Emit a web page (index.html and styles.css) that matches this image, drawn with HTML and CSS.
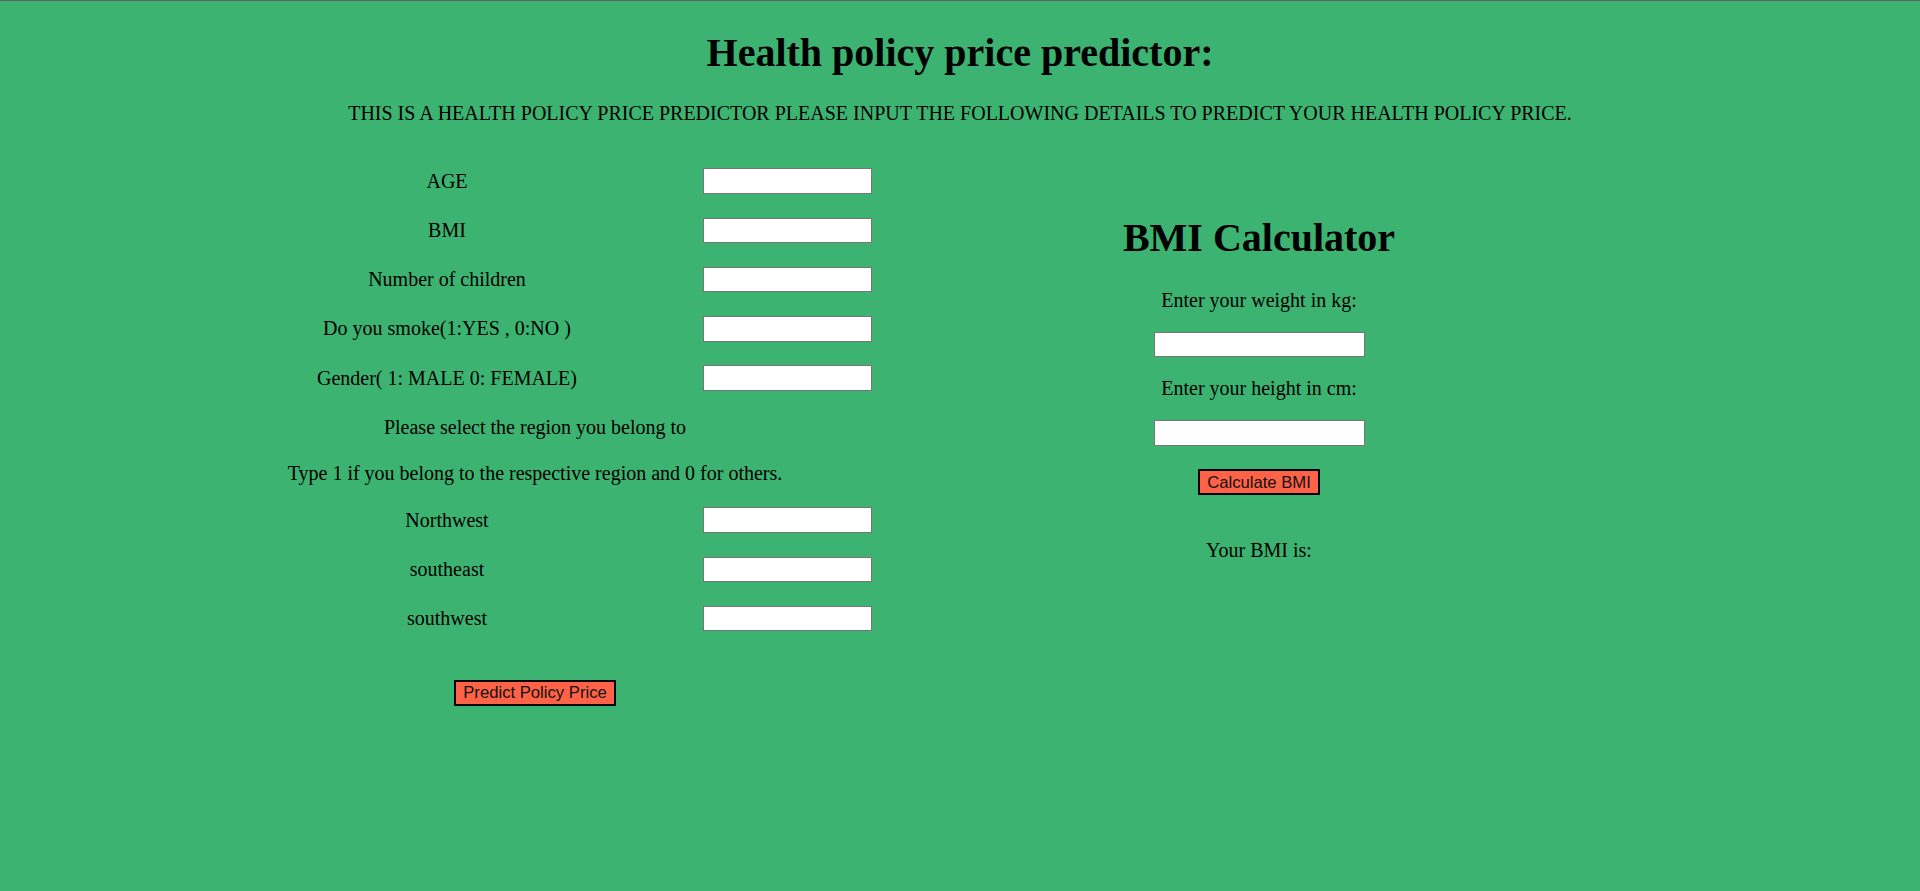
FILE: index.html
```html
<!DOCTYPE html>
<html lang="en">
<head>
<meta charset="utf-8">
<title>Health policy price predictor</title>
<link rel="stylesheet" href="styles.css">
</head>
<body>
<h1 class="title">Health policy price predictor:</h1>
<p class="intro">THIS IS A HEALTH POLICY PRICE PREDICTOR PLEASE INPUT THE FOLLOWING DETAILS TO PREDICT YOUR HEALTH POLICY PRICE.</p>
<div class="main">
  <form class="predictor">
    <div class="fields">
      <label class="label">AGE</label><div class="cell"><input class="field" type="text"></div>
      <label class="label">BMI</label><div class="cell"><input class="field" type="text"></div>
      <label class="label">Number of children</label><div class="cell"><input class="field" type="text"></div>
      <label class="label">Do you smoke(1:YES , 0:NO )</label><div class="cell"><input class="field" type="text"></div>
      <label class="label">Gender( 1: MALE 0: FEMALE)</label><div class="cell"><input class="field" type="text"></div>
      <div class="note">Please select the region you belong to</div>
      <div class="note">Type 1 if you belong to the respective region and 0 for others.</div>
      <label class="label">Northwest</label><div class="cell"><input class="field" type="text"></div>
      <label class="label">southeast</label><div class="cell"><input class="field" type="text"></div>
      <label class="label">southwest</label><div class="cell"><input class="field" type="text"></div>
    </div>
    <div class="actions"><button class="btn" type="button">Predict Policy Price</button></div>
  </form>
  <section class="bmi">
    <h1 class="bmi-title">BMI Calculator</h1>
    <div class="bmi-label">Enter your weight in kg:</div>
    <input class="bmi-field" type="text">
    <div class="bmi-label bmi-label-2">Enter your height in cm:</div>
    <input class="bmi-field" type="text">
    <button class="btn bmi-btn" type="button">Calculate BMI</button>
    <div class="bmi-result">Your BMI is:</div>
  </section>
</div>
</body>
</html>
```

FILE: styles.css
```css
html {
  background: #3cb371;
}

body {
  margin: 0;
  border-top: 1px solid #626266;
  background: #3cb371;
  color: #000;
  font-family: "Liberation Serif", "Times New Roman", serif;
  font-size: 20px;
  min-height: 890px;
}

.title {
  margin: 28px 0 26px;
  font-size: 40px;
  font-weight: bold;
  text-align: center;
  line-height: normal;
}

.intro {
  margin: 0;
  font-size: 20px;
  text-align: center;
  line-height: 22px;
}

.main {
  display: flex;
  align-items: flex-start;
  padding-left: 196px;
  gap: 175px;
}

.predictor {
  width: 678px;
  margin: 44.3px 0 0;
}

.fields {
  display: grid;
  grid-template-columns: 502px 176px;
  grid-template-rows: 25px 25px 25px 25px 25px 22px 22px 25px 25px 25px;
  row-gap: 24.3px;
}

.label {
  padding-top: 1.3px;
  text-align: center;
  line-height: 22px;
  align-self: start;
}

.cell {
  padding-left: 5.3px;
}

.field {
  display: block;
  box-sizing: border-box;
  width: 169px;
  height: 25.5px;
  margin: 0;
  padding: 1px 2px;
  border: 1px solid #767676;
  border-radius: 0;
  background: #fff;
  font-family: "Liberation Sans", Arial, sans-serif;
  font-size: 16.67px;
}

.note {
  grid-column: 1 / 3;
  padding-top: 1.3px;
  text-align: center;
  line-height: 22px;
}

.actions {
  margin-top: 48.8px;
  text-align: center;
}

.btn {
  box-sizing: border-box;
  height: 26px;
  margin: 0;
  padding: 0 7.5px;
  border: 2.5px solid #000;
  border-radius: 0;
  background: #ff6347;
  color: #111;
  font-family: "Liberation Sans", Arial, sans-serif;
  font-size: 16.67px;
  line-height: 19px;
}

.bmi {
  width: 420px;
  padding-top: 89.5px;
  display: flex;
  flex-direction: column;
  align-items: center;
}

.bmi-title {
  margin: 0;
  font-size: 40px;
  font-weight: bold;
  line-height: normal;
}

.bmi-label {
  margin-top: 28px;
  line-height: 22px;
}

.bmi-label-2 {
  margin-top: 20px;
}

.bmi-field {
  display: block;
  box-sizing: border-box;
  width: 211px;
  height: 25.5px;
  margin: 21.2px 0 0;
  padding: 1px 2px;
  border: 1px solid #767676;
  border-radius: 0;
  background: #fff;
  font-family: "Liberation Sans", Arial, sans-serif;
  font-size: 16.67px;
}

.bmi-btn {
  margin-top: 23.5px;
}

.bmi-result {
  margin-top: 44px;
  line-height: 22px;
}
```
